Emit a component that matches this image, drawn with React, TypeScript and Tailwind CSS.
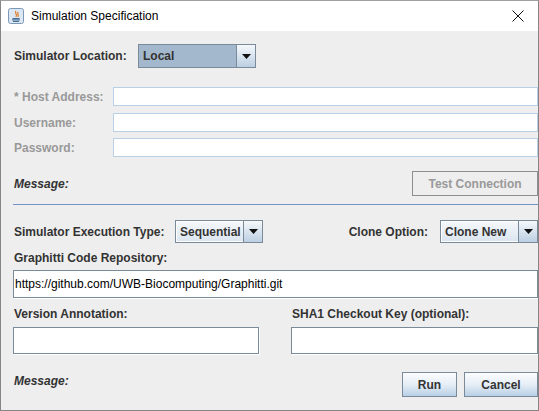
import { FC, ReactNode } from 'react'

const font = { fontFamily: '"Liberation Sans", Arial, sans-serif' }

const Arrow: FC = () => (
  <svg width="9" height="5" viewBox="0 0 9 5">
    <path d="M0 0 H9 L4.5 5 Z" fill="#111" />
  </svg>
)

const Combo: FC<{ label: string; width: string; selected?: boolean }> = ({
  label,
  width,
  selected
}) => (
  <div
    className={`${width} h-[24px] flex border border-[#7a8a99] text-[12px] font-bold text-[#333]`}
  >
    <div
      className={`flex-1 flex items-center pl-[3px] border border-r-0 ${
        selected
          ? 'bg-[#a3b8cc] border-[#a3b8cc]'
          : 'bg-gradient-to-b from-[#f4f7fb] to-[#dce6f0] border-white'
      }`}
    >
      {label}
    </div>
    <div className="w-[19px] flex items-center justify-center border-l border-[#7a8a99] bg-gradient-to-b from-[#f5f8fb] to-[#bccfe2]">
      <Arrow />
    </div>
  </div>
)

const Field: FC<{ className?: string; light?: boolean; children?: ReactNode }> = ({
  className,
  light,
  children
}) => (
  <div
    className={`bg-white flex items-center text-[12px] text-black pl-[1px] ${
      light
        ? 'border border-[#b8cfe5]'
        : 'border border-[#7a8a99] shadow-[1px_1px_0_#ffffff]'
    } ${className || ''}`}
  >
    {children}
  </div>
)

const Button: FC<{ label: string; width: string; disabled?: boolean }> = ({
  label,
  width,
  disabled
}) => (
  <div
    className={`${width} h-[25px] flex items-center justify-center text-[12px] font-bold border ${
      disabled
        ? 'border-[#8e8e8e] text-[#999] bg-[#eeeeee]'
        : 'border-[#7a8a99] text-[#333] bg-gradient-to-b from-[#fbfcfe] via-[#e6eef6] to-[#b8cfe5]'
    }`}
  >
    {label}
  </div>
)

const Label: FC<{ children: ReactNode; className?: string }> = ({ children, className }) => (
  <div className={`text-[12px] font-bold text-[#333] leading-[14px] ${className || ''}`}>
    {children}
  </div>
)

export default function App() {
  return (
    <div
      className="w-[539px] h-[411px] border border-[#858585] border-t-[#a0a0a0] bg-[#eeeeee] flex flex-col overflow-hidden"
      style={font}
    >
      {/* title bar */}
      <div className="h-[30px] bg-white flex items-center shrink-0">
        <svg width="16" height="16" viewBox="0 0 16 16" className="ml-[7px] mr-[7px]">
          <rect x="0.5" y="0.5" width="15" height="15" rx="2" fill="#dbe7f3" stroke="#7d98b6" />
          <path d="M4 12 H12 M5 13.5 H11" stroke="#4a6f97" strokeWidth="1" />
          <path d="M8 3 C6 5 10 6 8 9 M10 4 C9 6 11 7 10 9" stroke="#e07a1f" strokeWidth="1.2" fill="none" />
          <path d="M4.5 10 H11.5 Q12 11 11 11.5 H5 Q4 11 4.5 10 Z" fill="#4a6f97" />
        </svg>
        <span className="text-[12px] text-black">Simulation Specification</span>
        <svg width="12" height="12" viewBox="0 0 12 12" className="ml-auto mr-[14px]">
          <path d="M0.5 0.5 L11.5 11.5 M11.5 0.5 L0.5 11.5" stroke="#111" strokeWidth="1" />
        </svg>
      </div>

      <div className="flex flex-col pl-[12px]">
        {/* simulator location */}
        <div className="flex items-center mt-[13px]">
          <Label className="w-[125px] pl-[1px]">Simulator Location:</Label>
          <Combo label="Local" width="w-[118px]" selected />
        </div>

        {/* host fields */}
        <div className="flex items-center mt-[19px]">
          <Label className="w-[100px] pl-[1px] text-[#999]">* Host Address:</Label>
          <Field light className="w-[425px] h-[19px]" />
        </div>
        <div className="flex items-center mt-[7px]">
          <Label className="w-[100px] pl-[1px] text-[#999]">Username:</Label>
          <Field light className="w-[425px] h-[19px]" />
        </div>
        <div className="flex items-center mt-[6px]">
          <Label className="w-[100px] pl-[1px] text-[#999]">Password:</Label>
          <Field light className="w-[425px] h-[19px]" />
        </div>

        {/* message + test connection */}
        <div className="flex items-center mt-[14px]">
          <Label className="italic pl-[1px]">Message:</Label>
          <div className="ml-auto">
            <Button label="Test Connection" width="w-[126px] h-[24px]" disabled />
          </div>
        </div>

        <div className="h-px bg-[#7493c9] mt-[8px]" />

        {/* execution type + clone option */}
        <div className="flex items-center mt-[15px]">
          <Label className="w-[162px] pl-[1px]">Simulator Execution Type:</Label>
          <Combo label="Sequential" width="w-[88px] !h-[23px]" />
          <Label className="ml-auto mr-[12px]">Clone Option:</Label>
          <Combo label="Clone New" width="w-[98px] !h-[23px]" />
        </div>

        <Label className="mt-[8px] pl-[1px]">Graphitti Code Repository:</Label>
        <Field className="w-[525px] h-[28px] mt-[5px]">
          https://github.com/UWB-Biocomputing/Graphitti.git
        </Field>

        <div className="flex mt-[9px]">
          <div className="flex flex-col w-[278px]">
            <Label className="pl-[1px]">Version Annotation:</Label>
            <Field className="w-[246px] h-[27px] mt-[6px]" />
          </div>
          <div className="flex flex-col">
            <Label className="pl-[1px]">SHA1 Checkout Key (optional):</Label>
            <Field className="w-[247px] h-[27px] mt-[6px]" />
          </div>
        </div>

        {/* bottom row */}
        <div className="flex items-start mt-[18px]">
          <Label className="italic pl-[1px] mt-[2px]">Message:</Label>
          <div className="ml-auto flex gap-[7px]">
            <Button label="Run" width="w-[55px]" />
            <Button label="Cancel" width="w-[74px]" />
          </div>
        </div>
      </div>
    </div>
  )
}
